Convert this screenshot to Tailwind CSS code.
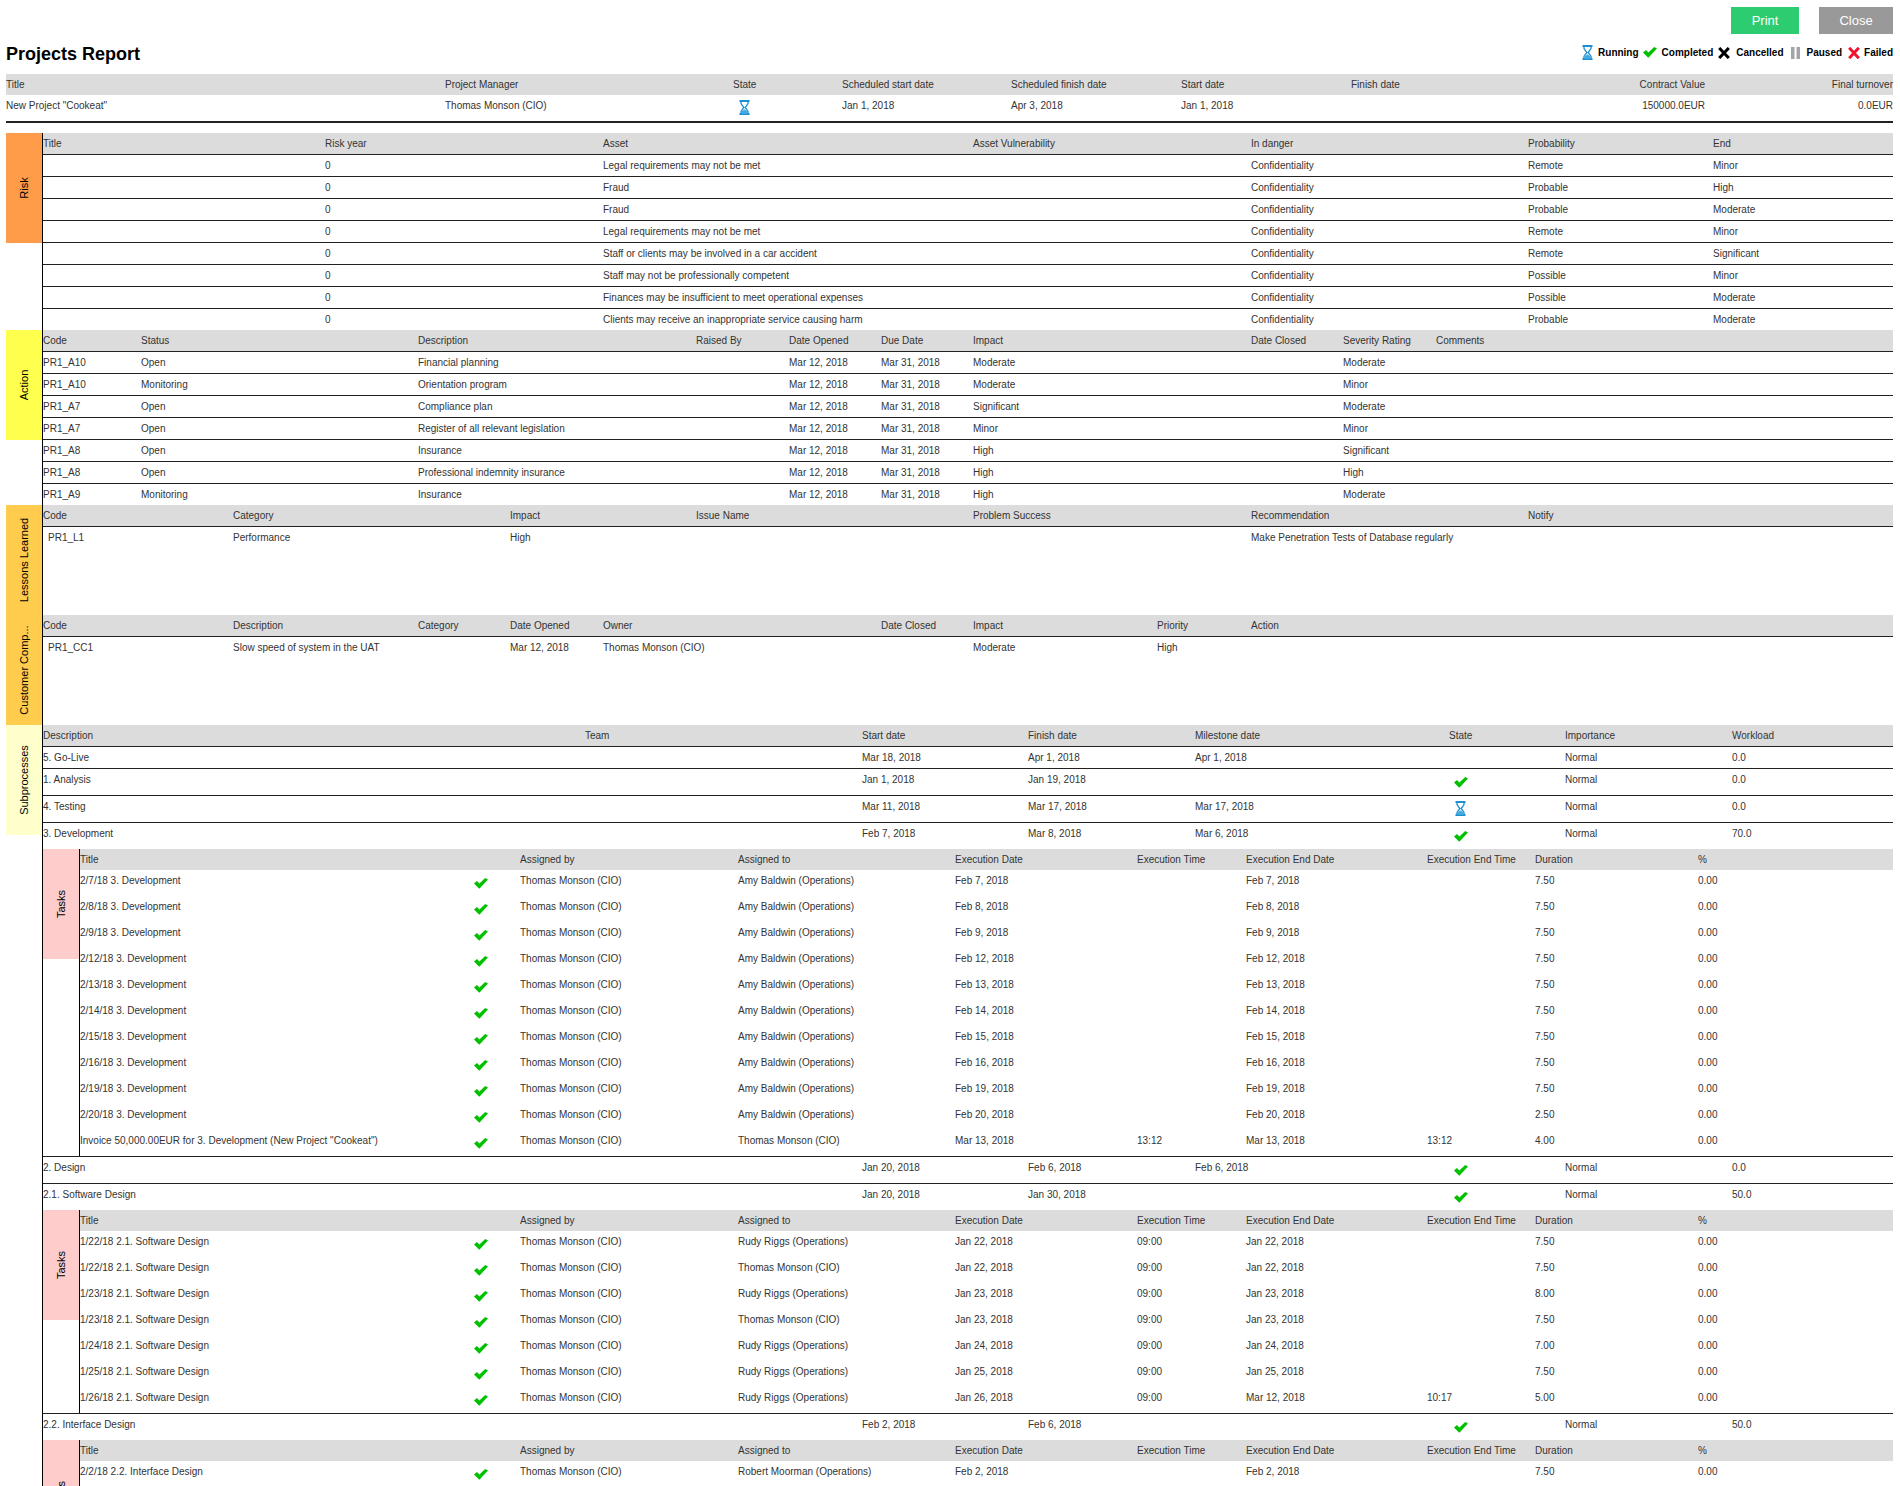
<!DOCTYPE html>
<html lang="en">
<head>
  <meta charset="UTF-8" />
  <title>Projects Report</title>
  <script src="https://cdn.jsdelivr.net/npm/@tailwindcss/browser@4"></script>
</head>
<body class="bg-white text-[#333] text-[10px] leading-[12px] font-['Liberation_Sans',Arial,sans-serif]">
  <div class="h-[1486px] overflow-hidden px-[6px] pr-[7px]">

    <!-- Buttons -->
    <div class="flex justify-end gap-[20px] pt-[7px]">
      <button class="w-[68px] h-[27px] bg-[#2ecc71] text-white text-[13px]">Print</button>
      <button class="w-[74px] h-[27px] bg-[#999] text-white text-[13px]">Close</button>
    </div>

    <!-- Title + legend -->
    <div class="flex justify-between items-center h-[40px]">
      <h1 class="text-[18px] font-bold text-black">Projects Report</h1>
      <div class="flex items-center font-bold text-black pb-[3px]">
        <svg class="w-[11px] h-[15px] mr-[5px]" viewBox="0 0 11 15"><use href="#hourglass" /></svg>
        <span class="mr-[4px]">Running</span>
        <svg class="w-[14px] h-[11px] mr-[5px]" viewBox="0 0 14 11"><use href="#check" /></svg>
        <span class="mr-[5px]">Completed</span>
        <svg class="w-[12px] h-[12px] mr-[6px]" viewBox="0 0 12 12"><path d="M1.2 1l9.6 10M10.8 1l-9.6 10" stroke="#000" stroke-width="3" /></svg>
        <span class="mr-[7px]">Cancelled</span>
        <svg class="w-[9px] h-[12px] mr-[7px]" viewBox="0 0 9 12"><path d="M0 0h3.5v12H0zM5.5 0H9v12H5.5z" fill="#a3a3a8" /></svg>
        <span class="mr-[6px]">Paused</span>
        <svg class="w-[12px] h-[12px] mr-[4px]" viewBox="0 0 12 12"><path d="M1.2 .8l9.6 10.4M10.8 .8l-9.6 10.4" stroke="#f0142f" stroke-width="3" /></svg>
        <span>Failed</span>
      </div>
    </div>

    <svg class="hidden">
      <symbol id="hourglass" viewBox="0 0 11 15">
        <path d="M.5 1h10M.5 14h10" stroke="#1b8fd0" stroke-width="2" fill="none" />
        <path d="M2 1v2.6L4.8 7.5 2 11.4V14M9 1v2.6L6.2 7.5 9 11.4V14" stroke="#1b8fd0" stroke-width="1.3" fill="none" />
        <path d="M2.4 14v-2.2L5.5 9.2l3.1 2.6V14z" fill="#3fa9e0" />
      </symbol>
      <symbol id="check" viewBox="0 0 14 11">
        <path d="M0 5.4 3 3l2.4 2.6L11.2 0 14 1.4 5.6 10.6h-.6z" fill="#00c000" />
      </symbol>
    </svg>

    <!-- Project -->
    <table class="table-fixed w-full border-separate border-spacing-0 border-b-2 border-[#222]">
      <colgroup>
        <col class="w-[439px]" /><col class="w-[288px]" /><col class="w-[109px]" /><col class="w-[169px]" /><col class="w-[170px]" /><col class="w-[170px]" /><col class="w-[170px]" /><col class="w-[184px]" /><col class="w-[188px]" />
      </colgroup>
      <thead>
        <tr class="bg-[#dcdcdc] text-left">
          <th class="h-[21px] pt-[5px] align-top font-normal">Title</th>
          <th class="h-[21px] pt-[5px] align-top font-normal">Project Manager</th>
          <th class="h-[21px] pt-[5px] align-top font-normal">State</th>
          <th class="h-[21px] pt-[5px] align-top font-normal">Scheduled start date</th>
          <th class="h-[21px] pt-[5px] align-top font-normal">Scheduled finish date</th>
          <th class="h-[21px] pt-[5px] align-top font-normal">Start date</th>
          <th class="h-[21px] pt-[5px] align-top font-normal">Finish date</th>
          <th class="h-[21px] pt-[5px] align-top font-normal text-right">Contract Value</th>
          <th class="h-[21px] pt-[5px] align-top font-normal text-right">Final turnover</th>
        </tr>
      </thead>
      <tbody>
        <tr>
          <td class="h-[26px] pt-[5px] align-top">New Project "Cookeat"</td>
          <td class="h-[26px] pt-[5px] align-top">Thomas Monson (CIO)</td>
          <td class="h-[26px] pt-[5px] align-top"><svg class="block w-[11px] h-[15px] ml-[6px]" viewBox="0 0 11 15"><use href="#hourglass" /></svg></td>
          <td class="h-[26px] pt-[5px] align-top">Jan 1, 2018</td>
          <td class="h-[26px] pt-[5px] align-top">Apr 3, 2018</td>
          <td class="h-[26px] pt-[5px] align-top">Jan 1, 2018</td>
          <td class="h-[26px] pt-[5px] align-top"></td>
          <td class="h-[26px] pt-[5px] align-top text-right">150000.0EUR</td>
          <td class="h-[26px] pt-[5px] align-top text-right">0.0EUR</td>
        </tr>
      </tbody>
    </table>

    <div class="h-[10px]"></div>

    <!-- Risk -->
    <section class="flex">
      <div class="w-[36px] h-[110px] shrink-0 bg-[#ff9c4a] flex items-center justify-center"><span class="-rotate-90 whitespace-nowrap text-[11px] text-black">Risk</span></div>
      <div class="flex-1 border-l border-black">
        <table class="table-fixed w-full border-separate border-spacing-0">
          <colgroup><col class="w-[282px]" /><col class="w-[278px]" /><col class="w-[370px]" /><col class="w-[278px]" /><col class="w-[277px]" /><col class="w-[185px]" /><col class="w-[180px]" /></colgroup>
          <thead>
            <tr class="bg-[#dcdcdc] text-left">
              <th class="h-[21px] pt-[5px] align-top font-normal">Title</th><th class="h-[21px] pt-[5px] align-top font-normal">Risk year</th><th class="h-[21px] pt-[5px] align-top font-normal">Asset</th><th class="h-[21px] pt-[5px] align-top font-normal">Asset Vulnerability</th><th class="h-[21px] pt-[5px] align-top font-normal">In danger</th><th class="h-[21px] pt-[5px] align-top font-normal">Probability</th><th class="h-[21px] pt-[5px] align-top font-normal">End</th>
            </tr>
          </thead>
          <tbody id="riskRows"></tbody>
        </table>
      </div>
    </section>

    <!-- Action -->
    <section class="flex">
      <div class="w-[36px] h-[110px] shrink-0 bg-[#ffff4d] flex items-center justify-center"><span class="-rotate-90 whitespace-nowrap text-[11px] text-black">Action</span></div>
      <div class="flex-1 border-l border-black">
        <table class="table-fixed w-full border-separate border-spacing-0">
          <colgroup><col class="w-[98px]" /><col class="w-[277px]" /><col class="w-[278px]" /><col class="w-[93px]" /><col class="w-[92px]" /><col class="w-[92px]" /><col class="w-[278px]" /><col class="w-[92px]" /><col class="w-[93px]" /><col class="w-[457px]" /></colgroup>
          <thead>
            <tr class="bg-[#dcdcdc] text-left">
              <th class="h-[21px] pt-[5px] align-top font-normal">Code</th><th class="h-[21px] pt-[5px] align-top font-normal">Status</th><th class="h-[21px] pt-[5px] align-top font-normal">Description</th><th class="h-[21px] pt-[5px] align-top font-normal">Raised By</th><th class="h-[21px] pt-[5px] align-top font-normal">Date Opened</th><th class="h-[21px] pt-[5px] align-top font-normal">Due Date</th><th class="h-[21px] pt-[5px] align-top font-normal">Impact</th><th class="h-[21px] pt-[5px] align-top font-normal">Date Closed</th><th class="h-[21px] pt-[5px] align-top font-normal">Severity Rating</th><th class="h-[21px] pt-[5px] align-top font-normal">Comments</th>
            </tr>
          </thead>
          <tbody id="actionRows"></tbody>
        </table>
      </div>
    </section>

    <!-- Lessons Learned -->
    <section class="flex">
      <div class="w-[36px] h-[110px] shrink-0 bg-[#ffcc4d] flex items-center justify-center"><span class="-rotate-90 whitespace-nowrap text-[11px] text-black">Lessons Learned</span></div>
      <div class="flex-1 border-l border-black">
        <table class="table-fixed w-full border-separate border-spacing-0">
          <colgroup><col class="w-[190px]" /><col class="w-[277px]" /><col class="w-[186px]" /><col class="w-[277px]" /><col class="w-[278px]" /><col class="w-[277px]" /><col class="w-[365px]" /></colgroup>
          <thead>
            <tr class="bg-[#dcdcdc] text-left">
              <th class="h-[21px] pt-[5px] align-top font-normal">Code</th><th class="h-[21px] pt-[5px] align-top font-normal">Category</th><th class="h-[21px] pt-[5px] align-top font-normal">Impact</th><th class="h-[21px] pt-[5px] align-top font-normal">Issue Name</th><th class="h-[21px] pt-[5px] align-top font-normal">Problem Success</th><th class="h-[21px] pt-[5px] align-top font-normal">Recommendation</th><th class="h-[21px] pt-[5px] align-top font-normal">Notify</th>
            </tr>
          </thead>
          <tbody>
            <tr>
              <td class="h-[22px] pt-[5px] align-top border-t border-[#222] pl-[5px]">PR1_L1</td>
              <td class="h-[22px] pt-[5px] align-top border-t border-[#222]">Performance</td>
              <td class="h-[22px] pt-[5px] align-top border-t border-[#222]">High</td>
              <td class="h-[22px] pt-[5px] align-top border-t border-[#222]"></td>
              <td class="h-[22px] pt-[5px] align-top border-t border-[#222]"></td>
              <td class="h-[22px] pt-[5px] align-top border-t border-[#222]">Make Penetration Tests of Database regularly</td>
              <td class="h-[22px] pt-[5px] align-top border-t border-[#222]"></td>
            </tr>
          </tbody>
        </table>
      </div>
    </section>

    <!-- Customer Complaints -->
    <section class="flex">
      <div class="w-[36px] h-[110px] shrink-0 bg-[#ffcc4d] flex items-center justify-center"><span class="-rotate-90 whitespace-nowrap text-[11px] text-black">Customer Comp...</span></div>
      <div class="flex-1 border-l border-black">
        <table class="table-fixed w-full border-separate border-spacing-0">
          <colgroup><col class="w-[190px]" /><col class="w-[185px]" /><col class="w-[92px]" /><col class="w-[93px]" /><col class="w-[278px]" /><col class="w-[92px]" /><col class="w-[184px]" /><col class="w-[94px]" /><col class="w-[642px]" /></colgroup>
          <thead>
            <tr class="bg-[#dcdcdc] text-left">
              <th class="h-[21px] pt-[5px] align-top font-normal">Code</th><th class="h-[21px] pt-[5px] align-top font-normal">Description</th><th class="h-[21px] pt-[5px] align-top font-normal">Category</th><th class="h-[21px] pt-[5px] align-top font-normal">Date Opened</th><th class="h-[21px] pt-[5px] align-top font-normal">Owner</th><th class="h-[21px] pt-[5px] align-top font-normal">Date Closed</th><th class="h-[21px] pt-[5px] align-top font-normal">Impact</th><th class="h-[21px] pt-[5px] align-top font-normal">Priority</th><th class="h-[21px] pt-[5px] align-top font-normal">Action</th>
            </tr>
          </thead>
          <tbody>
            <tr>
              <td class="h-[22px] pt-[5px] align-top border-t border-[#222] pl-[5px]">PR1_CC1</td>
              <td class="h-[22px] pt-[5px] align-top border-t border-[#222]">Slow speed of system in the UAT</td>
              <td class="h-[22px] pt-[5px] align-top border-t border-[#222]"></td>
              <td class="h-[22px] pt-[5px] align-top border-t border-[#222]">Mar 12, 2018</td>
              <td class="h-[22px] pt-[5px] align-top border-t border-[#222]">Thomas Monson (CIO)</td>
              <td class="h-[22px] pt-[5px] align-top border-t border-[#222]"></td>
              <td class="h-[22px] pt-[5px] align-top border-t border-[#222]">Moderate</td>
              <td class="h-[22px] pt-[5px] align-top border-t border-[#222]">High</td>
              <td class="h-[22px] pt-[5px] align-top border-t border-[#222]"></td>
            </tr>
          </tbody>
        </table>
      </div>
    </section>

    <!-- Subprocesses -->
    <section class="flex">
      <div class="w-[36px] h-[110px] shrink-0 bg-[#ffffcc] flex items-center justify-center"><span class="-rotate-90 whitespace-nowrap text-[11px] text-black">Subprocesses</span></div>
      <div class="flex-1 border-l border-black">
        <table class="table-fixed w-full border-separate border-spacing-0">
          <colgroup><col class="w-[542px]" /><col class="w-[277px]" /><col class="w-[166px]" /><col class="w-[167px]" /><col class="w-[254px]" /><col class="w-[116px]" /><col class="w-[167px]" /><col class="w-[161px]" /></colgroup>
          <thead>
            <tr class="bg-[#dcdcdc] text-left">
              <th class="h-[21px] pt-[5px] align-top font-normal">Description</th><th class="h-[21px] pt-[5px] align-top font-normal">Team</th><th class="h-[21px] pt-[5px] align-top font-normal">Start date</th><th class="h-[21px] pt-[5px] align-top font-normal">Finish date</th><th class="h-[21px] pt-[5px] align-top font-normal">Milestone date</th><th class="h-[21px] pt-[5px] align-top font-normal">State</th><th class="h-[21px] pt-[5px] align-top font-normal">Importance</th><th class="h-[21px] pt-[5px] align-top font-normal">Workload</th>
            </tr>
          </thead>
          <tbody id="subRows"></tbody>
        </table>
      </div>
    </section>
  </div>

  <script>
    const cell = "pt-[5px] align-top border-t border-[#222]";
    const taskCell = "h-[26px] pt-[5px] align-top";
    const checkIcon = `<svg class="block w-[14px] h-[11px] mt-[3px] ml-[5px]" viewBox="0 0 14 11"><use href="#check" /></svg>`;
    const glassIcon = `<svg class="block w-[11px] h-[15px] ml-[6px]" viewBox="0 0 11 15"><use href="#hourglass" /></svg>`;

    // Rows that are 22px high, with a rule on top
    const simpleRows = (rows) => rows.map((r) =>
      `<tr>${r.map((v) => `<td class="h-[22px] ${cell}">${v}</td>`).join("")}</tr>`
    ).join("");

    const risks = [
      ["Legal requirements may not be met", "Remote", "Minor"],
      ["Fraud", "Probable", "High"],
      ["Fraud", "Probable", "Moderate"],
      ["Legal requirements may not be met", "Remote", "Minor"],
      ["Staff or clients may be involved in a car accident", "Remote", "Significant"],
      ["Staff may not be professionally competent", "Possible", "Minor"],
      ["Finances may be insufficient to meet operational expenses", "Possible", "Moderate"],
      ["Clients may receive an inappropriate service causing harm", "Probable", "Moderate"],
    ];
    document.getElementById("riskRows").innerHTML = simpleRows(
      risks.map(([asset, prob, end]) => ["", "0", asset, "", "Confidentiality", prob, end])
    );

    const actions = [
      ["PR1_A10", "Open", "Financial planning", "Moderate", "Moderate"],
      ["PR1_A10", "Monitoring", "Orientation program", "Moderate", "Minor"],
      ["PR1_A7", "Open", "Compliance plan", "Significant", "Moderate"],
      ["PR1_A7", "Open", "Register of all relevant legislation", "Minor", "Minor"],
      ["PR1_A8", "Open", "Insurance", "High", "Significant"],
      ["PR1_A8", "Open", "Professional indemnity insurance", "High", "High"],
      ["PR1_A9", "Monitoring", "Insurance", "High", "Moderate"],
    ];
    document.getElementById("actionRows").innerHTML = simpleRows(
      actions.map(([code, status, desc, impact, sev]) => [code, status, desc, "", "Mar 12, 2018", "Mar 31, 2018", impact, "", sev, ""])
    );

    // Tasks block below a subprocess
    function tasksBlock(rows) {
      const body = rows.map((r) => `
        <tr>
          <td class="${taskCell}">${r[0]}</td>
          <td class="${taskCell}">${checkIcon}</td>
          ${r.slice(1).map((v) => `<td class="${taskCell}">${v}</td>`).join("")}
        </tr>`).join("");
      return `
        <tr><td colspan="8" class="p-0">
          <div class="flex">
            <div class="w-[36px] h-[110px] shrink-0 bg-[#ffcccc] flex items-center justify-center"><span class="-rotate-90 whitespace-nowrap text-[11px] text-black">Tasks</span></div>
            <div class="flex-1 border-l border-black">
              <table class="table-fixed w-full border-separate border-spacing-0">
                <colgroup><col class="w-[389px]" /><col class="w-[51px]" /><col class="w-[218px]" /><col class="w-[217px]" /><col class="w-[182px]" /><col class="w-[109px]" /><col class="w-[181px]" /><col class="w-[108px]" /><col class="w-[163px]" /><col class="w-[195px]" /></colgroup>
                <thead>
                  <tr class="bg-[#dcdcdc] text-left">
                    <th class="h-[21px] pt-[5px] align-top font-normal">Title</th><th></th><th class="h-[21px] pt-[5px] align-top font-normal">Assigned by</th><th class="h-[21px] pt-[5px] align-top font-normal">Assigned to</th><th class="h-[21px] pt-[5px] align-top font-normal">Execution Date</th><th class="h-[21px] pt-[5px] align-top font-normal">Execution Time</th><th class="h-[21px] pt-[5px] align-top font-normal">Execution End Date</th><th class="h-[21px] pt-[5px] align-top font-normal">Execution End Time</th><th class="h-[21px] pt-[5px] align-top font-normal">Duration</th><th class="h-[21px] pt-[5px] align-top font-normal">%</th>
                  </tr>
                </thead>
                <tbody>${body}</tbody>
              </table>
            </div>
          </div>
        </td></tr>`;
    }

    const boss = "Thomas Monson (CIO)";
    const amy = "Amy Baldwin (Operations)";
    const rudy = "Rudy Riggs (Operations)";

    const devTasks = [
      ["2/7/18", "Feb 7, 2018", "7.50"], ["2/8/18", "Feb 8, 2018", "7.50"], ["2/9/18", "Feb 9, 2018", "7.50"],
      ["2/12/18", "Feb 12, 2018", "7.50"], ["2/13/18", "Feb 13, 2018", "7.50"], ["2/14/18", "Feb 14, 2018", "7.50"],
      ["2/15/18", "Feb 15, 2018", "7.50"], ["2/16/18", "Feb 16, 2018", "7.50"], ["2/19/18", "Feb 19, 2018", "7.50"],
      ["2/20/18", "Feb 20, 2018", "2.50"],
    ].map(([d, date, dur]) => [`${d} 3. Development`, boss, amy, date, "", date, "", dur, "0.00"]);
    devTasks.push([`Invoice 50,000.00EUR for 3. Development (New Project "Cookeat")`, boss, boss, "Mar 13, 2018", "13:12", "Mar 13, 2018", "13:12", "4.00", "0.00"]);

    const softTasks = [
      ["1/22/18", rudy, "Jan 22, 2018", "Jan 22, 2018", "", "7.50"],
      ["1/22/18", boss, "Jan 22, 2018", "Jan 22, 2018", "", "7.50"],
      ["1/23/18", rudy, "Jan 23, 2018", "Jan 23, 2018", "", "8.00"],
      ["1/23/18", boss, "Jan 23, 2018", "Jan 23, 2018", "", "7.50"],
      ["1/24/18", rudy, "Jan 24, 2018", "Jan 24, 2018", "", "7.00"],
      ["1/25/18", rudy, "Jan 25, 2018", "Jan 25, 2018", "", "7.50"],
      ["1/26/18", rudy, "Jan 26, 2018", "Mar 12, 2018", "10:17", "5.00"],
    ].map(([d, to, start, end, endTime, dur]) => [`${d} 2.1. Software Design`, boss, to, start, "09:00", end, endTime, dur, "0.00"]);

    const uiTasks = [
      ["2/2/18 2.2. Interface Design", boss, "Robert Moorman (Operations)", "Feb 2, 2018", "", "Feb 2, 2018", "", "7.50", "0.00"],
    ];

    const subprocesses = [
      { name: "5. Go-Live", start: "Mar 18, 2018", finish: "Apr 1, 2018", mile: "Apr 1, 2018", load: "0.0", h: "h-[22px]" },
      { name: "1. Analysis", start: "Jan 1, 2018", finish: "Jan 19, 2018", mile: "", state: checkIcon, load: "0.0" },
      { name: "4. Testing", start: "Mar 11, 2018", finish: "Mar 17, 2018", mile: "Mar 17, 2018", state: glassIcon, load: "0.0" },
      { name: "3. Development", start: "Feb 7, 2018", finish: "Mar 8, 2018", mile: "Mar 6, 2018", state: checkIcon, load: "70.0", tasks: devTasks },
      { name: "2. Design", start: "Jan 20, 2018", finish: "Feb 6, 2018", mile: "Feb 6, 2018", state: checkIcon, load: "0.0" },
      { name: "2.1. Software Design", start: "Jan 20, 2018", finish: "Jan 30, 2018", mile: "", state: checkIcon, load: "50.0", tasks: softTasks },
      { name: "2.2. Interface Design", start: "Feb 2, 2018", finish: "Feb 6, 2018", mile: "", state: checkIcon, load: "50.0", tasks: uiTasks },
    ];

    document.getElementById("subRows").innerHTML = subprocesses.map((p) => {
      const h = p.h || "h-[27px]";
      const vals = [p.name, "", p.start, p.finish, p.mile, p.state || "", "Normal", p.load];
      const row = `<tr>${vals.map((v) => `<td class="${h} ${cell}">${v}</td>`).join("")}</tr>`;
      return row + (p.tasks ? tasksBlock(p.tasks) : "");
    }).join("");
  </script>
</body>
</html>
